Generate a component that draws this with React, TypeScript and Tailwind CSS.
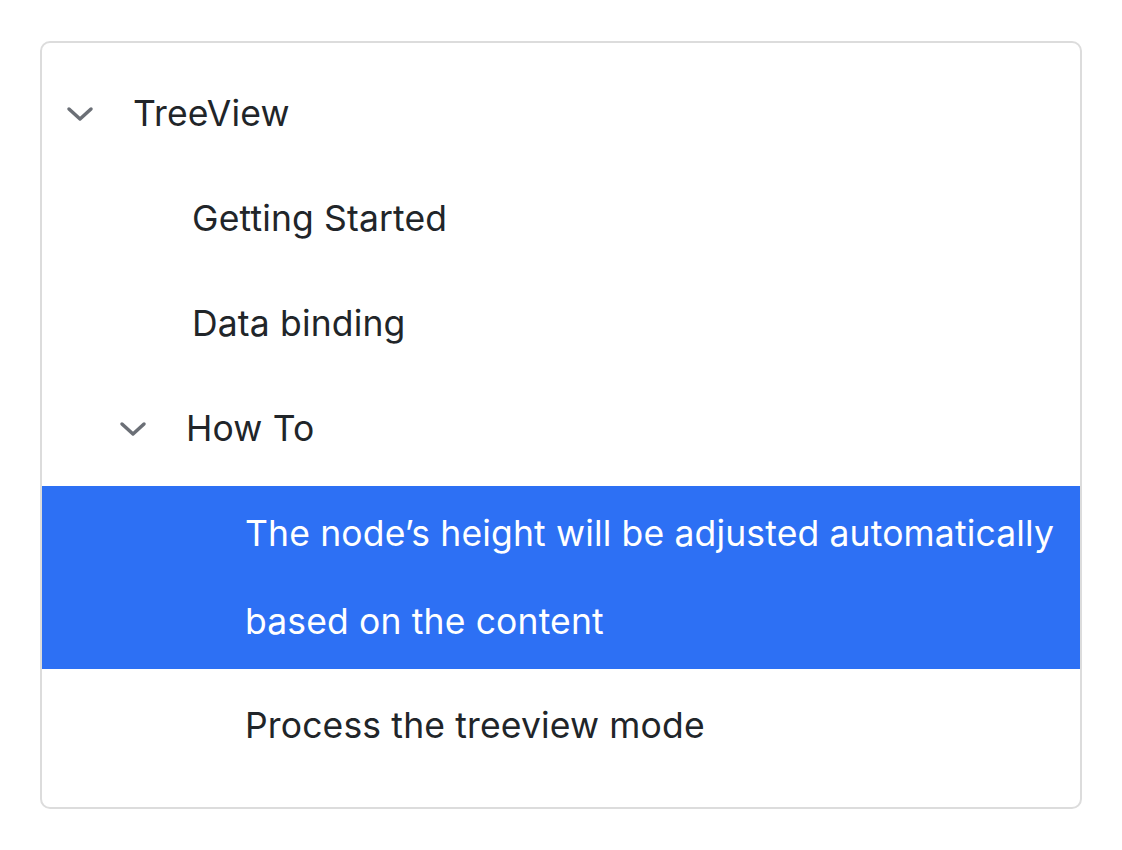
import React from "react";

interface TreeNode {
	label: string;
	level: number;
	expandable?: boolean;
	selected?: boolean;
}

const nodes: TreeNode[] = [
	{ label: "TreeView", level: 0, expandable: true },
	{ label: "Getting Started", level: 1 },
	{ label: "Data binding", level: 1 },
	{ label: "How To", level: 1, expandable: true },
	{ label: "The node’s height will be adjusted automatically based on the content", level: 2, selected: true },
	{ label: "Process the treeview mode", level: 2 },
];

const Chevron = () => (
	<svg width="28" height="16" viewBox="0 0 28 16" fill="none" className="shrink-0">
		<path d="M3 3 L14 13 L25 3" stroke="#6b6f76" strokeWidth="3.5" strokeLinecap="round" strokeLinejoin="round" />
	</svg>
);

const TreeRow: React.FC<{ node: TreeNode }> = ({ node }) => {
	const indent = 24 + node.level * 53;
	return (
		<div
			className={
				node.selected
					? "flex items-start bg-[#2d70f4] text-white py-[3.5px]"
					: "flex items-start text-[#212529] py-[4px]"
			}
			style={{ paddingLeft: indent }}
		>
			{node.expandable ? (
				<>
					<div className="h-[88px] flex items-center"><Chevron /></div>
					<span className="ml-[39px] leading-[88px]">{node.label}</span>
				</>
			) : (
				<span className="ml-[73px] leading-[88px] pr-6">{node.label}</span>
			)}
		</div>
	);
};

export default function App() {
	return (
		<div className="w-[1122px] h-[850px] bg-white pt-[41px] pl-[40px] font-['Inter',sans-serif] text-[35.5px] tracking-[0.15px]">
			<div className="w-[1042px] h-[768px] border-2 border-[#dcdcdc] rounded-[10px] pt-[23px] flex flex-col gap-[9px]">
				{nodes.map((node, i) => (
					<TreeRow key={i} node={node} />
				))}
			</div>
		</div>
	);
}
